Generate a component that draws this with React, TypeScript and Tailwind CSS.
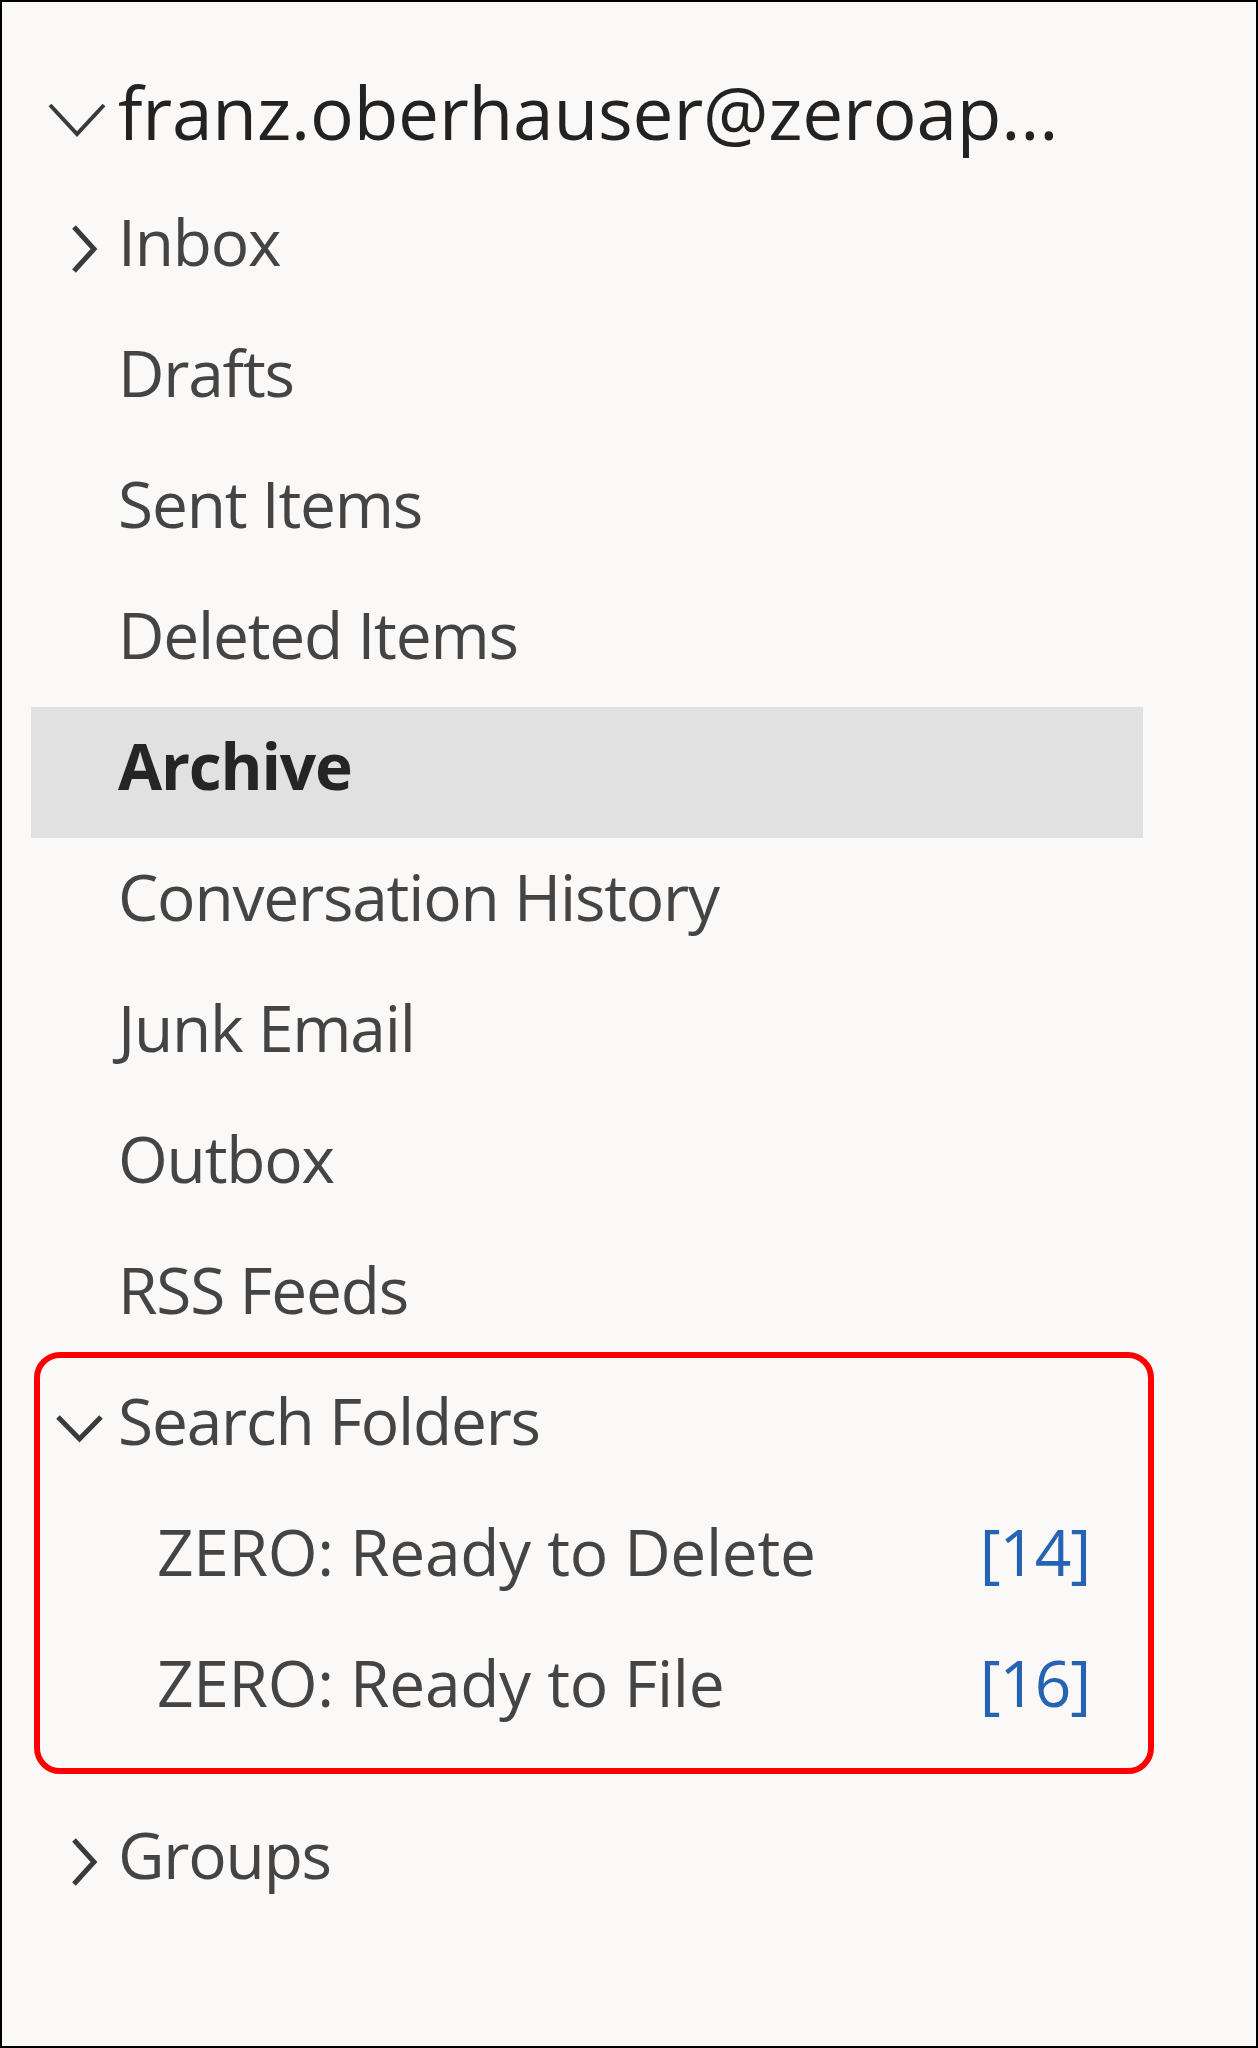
import React from 'react';

type RowProps = {
  label: string;
  chevron?: 'down' | 'right' | 'search';
  bold?: boolean;
  selected?: boolean;
};

const ChevronDown = ({ big }: { big?: boolean }) =>
  big ? (
    <svg width="60" height="36" viewBox="0 0 60 36" fill="none">
      <path d="M3 3 L30 32 L57 3" stroke="#3a3a3a" strokeWidth="4" />
    </svg>
  ) : (
    <svg width="49" height="30" viewBox="0 0 49 30" fill="none">
      <path d="M3 4 L24.5 26 L46 4" stroke="#3a3a3a" strokeWidth="5" />
    </svg>
  );

const ChevronRight = () => (
  <svg width="28" height="50" viewBox="0 0 28 50" fill="none">
    <path d="M4 3 L24 25 L4 47" stroke="#3a3a3a" strokeWidth="5" />
  </svg>
);

const Row = ({ label, chevron, bold, selected }: RowProps) => {
  return (
    <div
      className={`flex h-[131px] items-center ${selected ? 'ml-[29px] mr-[113px] bg-[#e1e1e1]' : ''}`}
    >
      {/* chevron slot */}
      <div className={`flex shrink-0 items-center ${selected ? 'w-[87px]' : 'w-[116px]'}`}>
        {chevron === 'right' && (
          <div className="ml-[68px]">
            <ChevronRight />
          </div>
        )}
      </div>
      <span
        className={`pb-[13px] text-[64px] leading-none tracking-[-1.2px] ${bold ? 'font-bold text-[#252525]' : 'text-[#444444]'}`}
      >
        {label}
      </span>
    </div>
  );
};

const SearchRow = ({ label, count }: { label: string; count: string }) => (
  <div className="flex h-[131px] items-center">
    <span className="ml-[155px] pb-[13px] text-[64px] leading-none tracking-[-0.3px] text-[#444444]">
      {label}
    </span>
    <span className="ml-auto mr-[58px] pb-[13px] text-[64px] leading-none tracking-[-1.2px] text-[#2563b3]">
      {count}
    </span>
  </div>
);

const folders = ['Drafts', 'Sent Items', 'Deleted Items'];

const moreFolders = ['Conversation History', 'Junk Email', 'Outbox', 'RSS Feeds'];

export default function App() {
  return (
    <div
      className="h-[2048px] w-[1258px] overflow-hidden border-2 border-black bg-[#faf9f8]"
      style={{ fontFamily: '"Open Sans", "Noto Sans", sans-serif' }}
    >
      <div className="flex flex-col pt-[50px]">
        {/* account */}
        <div className="flex h-[131px] items-center">
          <div className="w-[116px] shrink-0 pl-[45px] pt-[4px]">
            <ChevronDown big />
          </div>
          <span className="pb-[13px] text-[73px] leading-none tracking-[-0.2px] text-[#222222]">
            franz.oberhauser@zeroap...
          </span>
        </div>

        <Row label="Inbox" chevron="right" />
        {folders.map((f) => (
          <Row key={f} label={f} />
        ))}
        <Row label="Archive" bold selected />
        {moreFolders.map((f) => (
          <Row key={f} label={f} />
        ))}

        {/* search folders */}
        <div className="mt-[-10px] ml-[32px] mr-[102px] rounded-[26px] border-[6px] border-[#ff0000] pt-[4px] pb-[13px]">
          <div className="flex h-[131px] items-center">
            <div className="w-[78px] shrink-0 pl-[15px]">
              <ChevronDown />
            </div>
            <span className="pb-[13px] text-[64px] leading-none tracking-[-1.2px] text-[#444444]">
              Search Folders
            </span>
          </div>
          <div className="-ml-[38px]">
            <SearchRow label="ZERO: Ready to Delete" count="[14]" />
            <SearchRow label="ZERO: Ready to File" count="[16]" />
          </div>
        </div>

        <div className="mt-[22px]">
          <Row label="Groups" chevron="right" />
        </div>
      </div>
    </div>
  );
}
